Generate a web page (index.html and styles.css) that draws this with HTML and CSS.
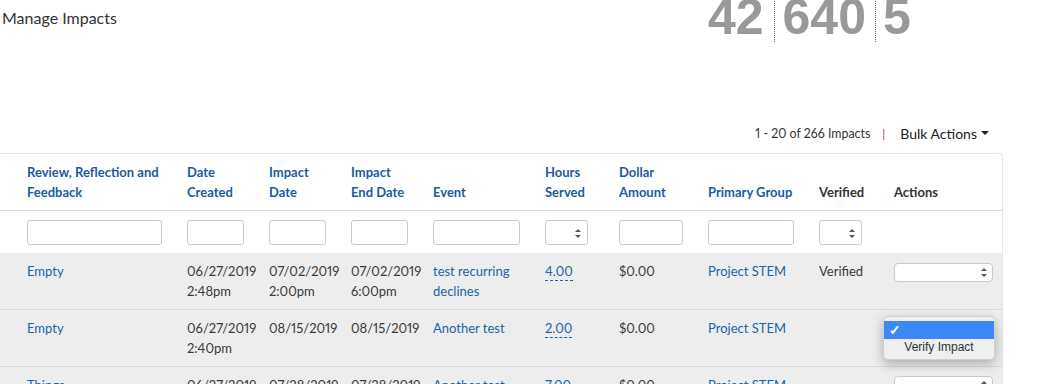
FILE: index.html
```html
<!DOCTYPE html>
<html>
<head>
<meta charset="utf-8">
<link rel="stylesheet" href="styles.css">
</head>
<body>
<div class="page">
  <header class="top">
    <h1 class="title">Manage Impacts</h1>
    <div class="stats">
      <span class="stat">42</span>
      <span class="stat">640</span>
      <span class="stat">5</span>
    </div>
  </header>
  <div class="toolbar">
    <span class="count">1 - 20 of 266 Impacts</span>
    <span class="sep">|</span>
    <span class="bulk">Bulk Actions <span class="caret"></span></span>
  </div>
  <div class="panel">
    <table class="grid">
      <colgroup>
        <col class="c1"><col class="c2"><col class="c3"><col class="c4"><col class="c5">
        <col class="c6"><col class="c7"><col class="c8"><col class="c9"><col class="c10">
      </colgroup>
      <thead>
        <tr class="head">
          <th class="link">Review, Reflection and<br>Feedback</th>
          <th class="link">Date<br>Created</th>
          <th class="link">Impact<br>Date</th>
          <th class="link">Impact<br>End Date</th>
          <th class="link">Event</th>
          <th class="link">Hours<br>Served</th>
          <th class="link">Dollar<br>Amount</th>
          <th class="link">Primary Group</th>
          <th>Verified</th>
          <th>Actions</th>
        </tr>
        <tr class="filters">
          <td><span class="input w135"></span></td>
          <td><span class="input w57"></span></td>
          <td><span class="input w57"></span></td>
          <td><span class="input w57"></span></td>
          <td><span class="input w87"></span></td>
          <td><span class="input sel w43"><span class="arrows"></span></span></td>
          <td><span class="input w64"></span></td>
          <td><span class="input w86"></span></td>
          <td><span class="input sel w43"><span class="arrows"></span></span></td>
          <td></td>
        </tr>
      </thead>
      <tbody>
        <tr class="row">
          <td><a class="lnk">Empty</a></td>
          <td>06/27/2019<br>2:48pm</td>
          <td>07/02/2019<br>2:00pm</td>
          <td>07/02/2019<br>6:00pm</td>
          <td><a class="lnk">test recurring<br>declines</a></td>
          <td><a class="lnk hours">4.00</a></td>
          <td>$0.00</td>
          <td><a class="lnk">Project STEM</a></td>
          <td>Verified</td>
          <td><span class="action"><span class="arrows"></span></span></td>
        </tr>
        <tr class="row">
          <td><a class="lnk">Empty</a></td>
          <td>06/27/2019<br>2:40pm</td>
          <td>08/15/2019</td>
          <td>08/15/2019</td>
          <td><a class="lnk">Another test</a></td>
          <td><a class="lnk hours">2.00</a></td>
          <td>$0.00</td>
          <td><a class="lnk">Project STEM</a></td>
          <td></td>
          <td class="menu-cell">
            <div class="popup">
              <div class="opt selected"><span class="check">✓</span></div>
              <div class="opt">Verify Impact</div>
            </div>
          </td>
        </tr>
        <tr class="row">
          <td><a class="lnk">Things</a></td>
          <td>06/27/2019<br>2:30pm</td>
          <td>07/28/2019</td>
          <td>07/28/2019</td>
          <td><a class="lnk">Another test</a></td>
          <td><a class="lnk hours">7.00</a></td>
          <td>$0.00</td>
          <td><a class="lnk">Project STEM</a></td>
          <td></td>
          <td><span class="action low"><span class="arrows"></span></span></td>
        </tr>
      </tbody>
    </table>
  </div>
</div>
</body>
</html>
```

FILE: styles.css
```css
html, body {
  margin: 0;
  padding: 0;
  background: #fff;
  overflow: hidden;
}
body {
  font-family: Lato, "Open Sans", "Liberation Sans", sans-serif;
  font-variant-numeric: proportional-nums;
  color: #333;
  width: 1043px;
  height: 384px;
}
.page {
  display: flex;
  flex-direction: column;
}
.top {
  display: flex;
  align-items: flex-start;
  height: 122px;
  overflow: hidden;
}
.title {
  margin: 8px 0 0 2px;
  font-size: 16px;
  font-weight: 400;
  line-height: 20px;
  color: #333;
}
.stats {
  display: flex;
  margin-left: 591px;
  margin-top: -7px;
}
.stat {
  font-family: "Liberation Sans", Arial, sans-serif;
  font-weight: 700;
  font-size: 50px;
  line-height: 49px;
  color: #999;
  height: 49px;
}
.stat:nth-child(1) { padding: 0 10px 0 0; }
.stat:nth-child(2) { padding: 0 9px 0 8px; }
.stat:nth-child(3) { padding: 0 0 0 7px; }
.stat + .stat {
  border-left: 1px dotted #666;
}
.toolbar {
  display: flex;
  justify-content: flex-end;
  align-items: center;
  height: 22px;
  padding-right: 54px;
  margin-bottom: 9px;
}
.count {
  font-size: 12.4px;
  color: #333;
}
.sep {
  color: #c0323a;
  font-size: 12px;
  margin: 0 15px 0 12px;
}
.bulk {
  font-size: 14px;
  color: #222;
  display: inline-flex;
  align-items: center;
}
.caret {
  display: inline-block;
  width: 0;
  height: 0;
  margin-left: 4px;
  border-left: 4px solid transparent;
  border-right: 4px solid transparent;
  border-top: 4px solid #222;
}
.panel {
  width: 1002px;
  border-top: 1px solid #e6e6e6;
  border-right: 1px solid #e6e6e6;
  border-top-right-radius: 4px;
}
.grid {
  width: 1002px;
  table-layout: fixed;
  border-collapse: collapse;
  font-size: 13px;
  line-height: 20px;
}
.c1 { width: 187px; }
.c2, .c3, .c4 { width: 82px; }
.c5 { width: 112px; }
.c6 { width: 74px; }
.c7 { width: 89px; }
.c8 { width: 111px; }
.c9 { width: 75px; }
.c10 { width: 108px; }
.grid th, .grid td {
  padding: 0 6px 0 0;
  text-align: left;
  vertical-align: top;
  white-space: nowrap;
}
.grid th:first-child, .grid td:first-child { padding-left: 27px; }
.head th {
  vertical-align: bottom;
  font-weight: 700;
  color: #333;
  padding-top: 8px;
  padding-bottom: 8px;
  height: 40px;
  border-bottom: 1px solid #ddd;
}
.head th.link { color: #1b5ba1; }
.filters td {
  height: 42px;
  padding-top: 9px;
  padding-bottom: 0;
  box-sizing: border-box;
  vertical-align: top;
}
.input {
  display: block;
  box-sizing: border-box;
  height: 25px;
  border: 1px solid #c8c8c8;
  border-radius: 3px;
  background: #fff;
  position: relative;
}
.w135 { width: 135px; }
.w57 { width: 57px; }
.w87 { width: 87px; }
.w43 { width: 43px; }
.w64 { width: 64px; }
.w86 { width: 86px; }
.arrows {
  position: absolute;
  right: 6px;
  top: 50%;
  width: 6px;
  height: 9px;
  margin-top: -4px;
}
.arrows::before, .arrows::after {
  content: "";
  position: absolute;
  left: 0;
  border-left: 3px solid transparent;
  border-right: 3px solid transparent;
}
.arrows::before { top: 0; border-bottom: 3.5px solid #555; }
.arrows::after { bottom: 0; border-top: 3.5px solid #555; }
.row td {
  background: #ededed;
  color: #3a3a3a;
  padding-top: 8px;
  padding-bottom: 8px;
  height: 40px;
  border-bottom: 1px solid #dadada;
}
.lnk {
  color: #2064a8;
  text-decoration: none;
}
.hours {
  border-bottom: 1px dashed #2064a8;
  padding-bottom: 1px;
}
.action {
  display: block;
  position: relative;
  box-sizing: border-box;
  width: 99px;
  height: 19px;
  margin-top: 2px;
  background: #fff;
  border: 1px solid #c9c9c9;
  border-radius: 4px;
}
.action.low { margin-top: 1px; }
.action .arrows { right: 5px; }
.menu-cell { position: relative; }
.popup {
  position: absolute;
  left: -11px;
  top: 6px;
  width: 112px;
  box-sizing: border-box;
  padding: 4px 0 3px;
  background: #efefef;
  border-radius: 5px;
  border: 1px solid #d0d0d0;
  box-shadow: 0 4px 12px rgba(0,0,0,0.28);
  font-family: "Liberation Sans", Arial, sans-serif;
  font-size: 12px;
  line-height: 17px;
  color: #333;
}
.opt {
  height: 17px;
  text-align: center;
}
.opt.selected {
  background: #3d87f7;
  color: #fff;
  text-align: left;
  height: 18px;
  line-height: 18px;
}
.check {
  display: inline-block;
  margin-left: 5px;
  font-size: 14px;
  font-weight: 700;
}
```
